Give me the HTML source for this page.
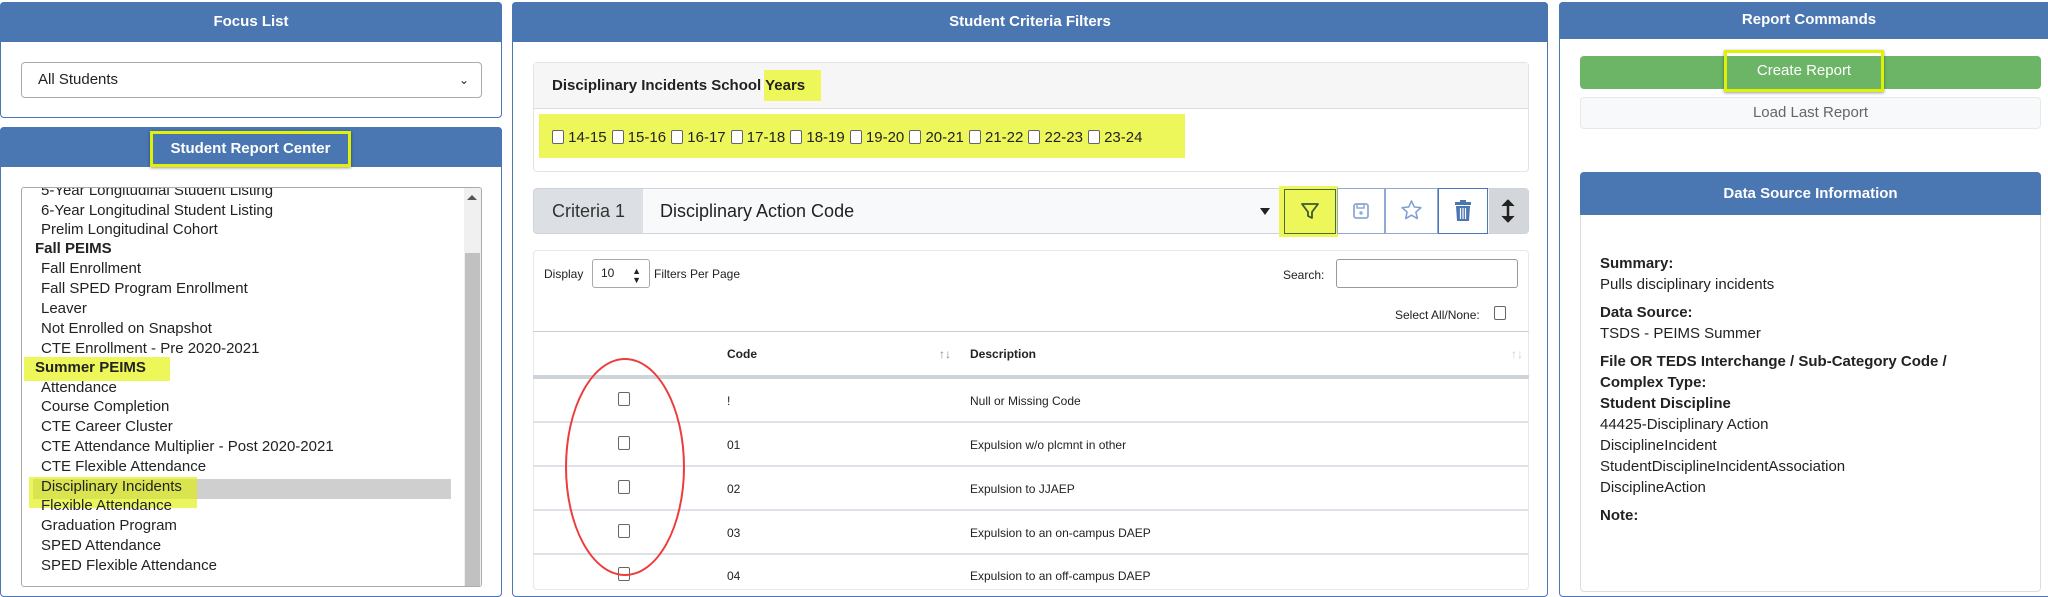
<!DOCTYPE html>
<html><head><meta charset="utf-8"><style>
*{box-sizing:border-box;margin:0;padding:0}
body{width:2048px;height:577px;overflow:hidden;background:#fff;font-family:"Liberation Sans",sans-serif;color:#222;position:relative}
.a{position:absolute}
.hd{background:#4a76b2;color:#fff;font-weight:bold;font-size:15px;text-align:center;border-radius:4px 4px 0 0}
.pn{border:1.5px solid #4a76b2;border-radius:4px}
.li{position:absolute;left:41px;font-size:15px;white-space:nowrap;line-height:20px}
.lh{left:35px;font-weight:bold}
.cb{display:inline-block;width:12px;height:14px;border:1px solid #666;border-radius:2px;vertical-align:-2px;background:#fff}
.yr{font-size:15px;margin-right:5px}
.t{position:absolute;font-size:12px;white-space:nowrap}
.rl{position:absolute;left:533px;width:996px;height:2px;background:#dde2e8}
.ds{position:absolute;left:1600px;font-size:15px;white-space:nowrap}
.ds b{font-weight:bold}
</style></head><body>
<div class="a pn" style="left:0;top:2px;width:502px;height:116px"></div>
<div class="a hd" style="left:0;top:2px;width:502px;height:40px;line-height:40px">Focus List</div>
<div class="a" style="left:21px;top:62px;width:461px;height:36px;border:1px solid #aaa;border-radius:4px;font-size:15px;line-height:34px;padding-left:16px">All Students<span style="position:absolute;right:12px;top:0;font-size:12px">&#8964;</span></div>
<div class="a pn" style="left:0;top:127px;width:502px;height:470px"></div>
<div class="a hd" style="left:0;top:127px;width:502px;height:40px"></div>
<div class="a" style="left:150px;top:131px;width:201px;height:36px;border:3px solid #e1f00a;box-shadow:0 1px 3px rgba(0,0,0,.4);color:#fff;font-weight:bold;font-size:15px;text-align:center;line-height:30px">Student Report Center</div>
<div class="a" style="left:21px;top:187px;width:461px;height:400px;border:1px solid #aaa;border-radius:3px;overflow:hidden;background:#fff">
 <div class="a" style="left:442px;top:0;width:17px;height:400px;background:#f0f0f0"></div>
 <div class="a" style="left:443px;top:65px;width:15px;height:340px;background:#c1c1c1"></div>
 <div class="a" style="left:445px;top:7px;width:0;height:0;border-left:5px solid transparent;border-right:5px solid transparent;border-bottom:5px solid #555"></div>
</div>
<div class="a" style="left:24px;top:357px;width:146px;height:24px;background:#eef75a"></div>
<div class="a" style="left:33px;top:479px;width:418px;height:20px;background:#cfcfcf"></div>
<div class="a" style="left:29px;top:477px;width:168px;height:31px;background:rgba(225,240,10,.65)"></div>
<div class="a" style="left:0;top:188px;width:480px;height:389px;overflow:hidden">
<div class="li" style="top:-7px">5-Year Longitudinal Student Listing</div>
<div class="li" style="top:13px">6-Year Longitudinal Student Listing</div>
<div class="li" style="top:32px">Prelim Longitudinal Cohort</div>
<div class="li lh" style="top:51px">Fall PEIMS</div>
<div class="li" style="top:71px">Fall Enrollment</div>
<div class="li" style="top:91px">Fall SPED Program Enrollment</div>
<div class="li" style="top:111px">Leaver</div>
<div class="li" style="top:131px">Not Enrolled on Snapshot</div>
<div class="li" style="top:151px">CTE Enrollment - Pre 2020-2021</div>
<div class="li lh" style="top:170px">Summer PEIMS</div>
<div class="li" style="top:190px">Attendance</div>
<div class="li" style="top:209px">Course Completion</div>
<div class="li" style="top:229px">CTE Career Cluster</div>
<div class="li" style="top:249px">CTE Attendance Multiplier - Post 2020-2021</div>
<div class="li" style="top:269px">CTE Flexible Attendance</div>
<div class="li" style="top:289px">Disciplinary Incidents</div>
<div class="li" style="top:308px">Flexible Attendance</div>
<div class="li" style="top:328px">Graduation Program</div>
<div class="li" style="top:348px">SPED Attendance</div>
<div class="li" style="top:368px">SPED Flexible Attendance</div>
</div>
<div class="a pn" style="left:512px;top:2px;width:1036px;height:595px"></div>
<div class="a hd" style="left:512px;top:2px;width:1036px;height:40px;line-height:40px">Student Criteria Filters</div>
<div class="a" style="left:533px;top:62px;width:996px;height:110px;border:1px solid #e3e3e3;border-radius:4px"></div>
<div class="a" style="left:534px;top:63px;width:994px;height:46px;background:#f6f6f6;border-bottom:1px solid #ddd"></div>
<div class="a" style="left:764px;top:70px;width:57px;height:31px;background:#eef75a"></div>
<div class="a" style="left:552px;top:77px;font-size:15px;font-weight:bold;white-space:nowrap">Disciplinary Incidents School Years</div>
<div class="a" style="left:539px;top:114px;width:646px;height:44px;background:#eef75a"></div>
<div class="a" style="left:552px;top:129px;white-space:nowrap"><span class="cb"></span><span class="yr"> 14-15</span><span class="cb"></span><span class="yr"> 15-16</span><span class="cb"></span><span class="yr"> 16-17</span><span class="cb"></span><span class="yr"> 17-18</span><span class="cb"></span><span class="yr"> 18-19</span><span class="cb"></span><span class="yr"> 19-20</span><span class="cb"></span><span class="yr"> 20-21</span><span class="cb"></span><span class="yr"> 21-22</span><span class="cb"></span><span class="yr"> 22-23</span><span class="cb"></span><span class="yr"> 23-24</span></div>
<div class="a" style="left:533px;top:188px;width:996px;height:46px;border:1px solid #cfd4da;border-radius:4px;background:#f8f9fa;overflow:hidden">
 <div class="a" style="left:0;top:0;width:109px;height:46px;background:#dcdfe3;font-size:18px;line-height:44px;text-align:center;color:#333">Criteria 1</div>
 <div class="a" style="left:126px;top:0;font-size:18px;line-height:44px;color:#222">Disciplinary Action Code</div>
 <div class="a" style="left:726px;top:19px;border-left:5px solid transparent;border-right:5px solid transparent;border-top:7px solid #222"></div>
 <div class="a" style="left:955px;top:0;width:41px;height:46px;background:#d3d6da"></div>
</div>
<div class="a" style="left:1279px;top:186px;width:59px;height:51px;background:#eef75a"></div>
<div class="a" style="left:1284px;top:189px;width:52px;height:45px;border:1.5px solid #4c6a3c"></div>
<svg class="a" style="left:1299px;top:200px" width="22" height="22" viewBox="0 0 22 22"><path d="M3 4h16l-6 8v6l-4 -2v-4z" fill="none" stroke="#3d5a2e" stroke-width="1.8" stroke-linejoin="round"/></svg>
<div class="a" style="left:1337px;top:188px;width:48px;height:46px;background:#fff;border:1px solid #8fa9d4"></div>
<svg class="a" style="left:1351px;top:201px" width="20" height="20" viewBox="0 0 20 20"><rect x="3" y="3" width="14" height="14" rx="2" fill="none" stroke="#8fa9d4" stroke-width="1.8"/><rect x="6" y="3" width="7" height="4" fill="none" stroke="#8fa9d4" stroke-width="1.5"/><circle cx="10" cy="12" r="1.7" fill="#8fa9d4"/></svg>
<div class="a" style="left:1385px;top:188px;width:53px;height:46px;background:#fff;border:1px solid #8fa9d4"></div>
<svg class="a" style="left:1400px;top:199px" width="23" height="23" viewBox="0 0 24 24"><path d="M12 2l2.9 6.3 6.9.7-5.2 4.6 1.5 6.8L12 16.9 5.9 20.4l1.5-6.8L2.2 9l6.9-.7z" fill="none" stroke="#7d9fd6" stroke-width="1.6" stroke-linejoin="round"/></svg>
<div class="a" style="left:1438px;top:188px;width:50px;height:46px;background:#fff;border:1.5px solid #4a76b2"></div>
<svg class="a" style="left:1453px;top:199px" width="20" height="23" viewBox="0 0 20 23"><rect x="2" y="3" width="16" height="3" fill="#4a76b2"/><rect x="7" y="1" width="6" height="3" fill="#4a76b2"/><path d="M3 7h14l-1 15H4z" fill="#4a76b2"/><path d="M7.5 9v11M10 9v11M12.5 9v11" stroke="#fff" stroke-width="1.2"/></svg>
<svg class="a" style="left:1500px;top:198px" width="16" height="26" viewBox="0 0 16 26"><path d="M8 2v22" stroke="#222" stroke-width="2.5"/><path d="M2 8l6-6 6 6M2 18l6 6 6-6" fill="#222" stroke="#222" stroke-width="1"/></svg>
<div class="a" style="left:533px;top:250px;width:996px;height:340px;border:1px solid #e8e8e8;border-radius:4px"></div>
<div class="t" style="left:544px;top:267px">Display</div>
<div class="a" style="left:592px;top:259px;width:58px;height:29px;border:1px solid #aaa;border-radius:3px;font-size:12px;line-height:27px;padding-left:8px">10<span style="position:absolute;right:8px;font-size:9px;line-height:9px;top:7px">▲<br>▼</span></div>
<div class="t" style="left:654px;top:267px">Filters Per Page</div>
<div class="t" style="left:1283px;top:268px">Search:</div>
<div class="a" style="left:1336px;top:259px;width:182px;height:29px;border:1px solid #999;border-radius:3px"></div>
<div class="t" style="left:1395px;top:308px">Select All/None:</div>
<div class="a cb" style="left:1494px;top:306px"></div>
<div class="rl" style="top:331px;height:1px;background:#ccc"></div>
<div class="t" style="left:727px;top:347px;font-weight:bold">Code</div>
<div class="t" style="left:939px;top:347px;color:#888">↑↓</div>
<div class="t" style="left:970px;top:347px;font-weight:bold">Description</div>
<div class="t" style="left:1511px;top:347px;color:#ccc">↑↓</div>
<div class="rl" style="top:375px;height:4px;background:#cfd4da"></div>
<div class="t" style="left:727px;top:394px">!</div><div class="t" style="left:970px;top:394px">Null or Missing Code</div><div class="a cb" style="left:618px;top:392px"></div>
<div class="rl" style="top:421px"></div>
<div class="t" style="left:727px;top:438px">01</div><div class="t" style="left:970px;top:438px">Expulsion w/o plcmnt in other</div><div class="a cb" style="left:618px;top:436px"></div>
<div class="rl" style="top:465px"></div>
<div class="t" style="left:727px;top:482px">02</div><div class="t" style="left:970px;top:482px">Expulsion to JJAEP</div><div class="a cb" style="left:618px;top:480px"></div>
<div class="rl" style="top:509px"></div>
<div class="t" style="left:727px;top:526px">03</div><div class="t" style="left:970px;top:526px">Expulsion to an on-campus DAEP</div><div class="a cb" style="left:618px;top:524px"></div>
<div class="rl" style="top:553px"></div>
<div class="t" style="left:727px;top:569px">04</div><div class="t" style="left:970px;top:569px">Expulsion to an off-campus DAEP</div><div class="a cb" style="left:618px;top:567px"></div>
<div class="a" style="left:565px;top:358px;width:120px;height:218px;border:2px solid #ee3c3c;border-radius:50%"></div>
<div class="a" style="left:1559px;top:2px;width:500px;height:595px;border:1.5px solid #4a76b2;border-radius:4px"></div>
<div class="a hd" style="left:1559px;top:2px;width:500px;height:37px;line-height:36px">Report Commands</div>
<div class="a" style="left:1580px;top:56px;width:461px;height:33px;background:#6db566;border-radius:4px"></div>
<div class="a" style="left:1724px;top:50px;width:160px;height:42px;border:3px solid #e1f00a;box-shadow:0 1px 3px rgba(0,0,0,.4);color:#fff;font-size:15px;text-align:center;line-height:36px">Create Report</div>
<div class="a" style="left:1580px;top:97px;width:461px;height:32px;background:#f8f9fa;border:1px solid #e6e8ea;border-radius:4px;color:#666;font-size:15px;text-align:center;line-height:30px">Load Last Report</div>
<div class="a" style="left:1580px;top:172px;width:461px;height:420px;border:1px solid #ddd;border-radius:4px"></div>
<div class="a hd" style="left:1580px;top:172px;width:461px;height:43px;line-height:43px">Data Source Information</div>
<div class="ds" style="top:255px"><b>Summary:</b></div>
<div class="ds" style="top:276px">Pulls disciplinary incidents</div>
<div class="ds" style="top:304px"><b>Data Source:</b></div>
<div class="ds" style="top:325px">TSDS - PEIMS Summer</div>
<div class="ds" style="top:353px"><b>File OR TEDS Interchange / Sub-Category Code /</b></div>
<div class="ds" style="top:374px"><b>Complex Type:</b></div>
<div class="ds" style="top:395px"><b>Student Discipline</b></div>
<div class="ds" style="top:416px">44425-Disciplinary Action</div>
<div class="ds" style="top:437px">DisciplineIncident</div>
<div class="ds" style="top:458px">StudentDisciplineIncidentAssociation</div>
<div class="ds" style="top:479px">DisciplineAction</div>
<div class="ds" style="top:507px"><b>Note:</b></div>
</body></html>
